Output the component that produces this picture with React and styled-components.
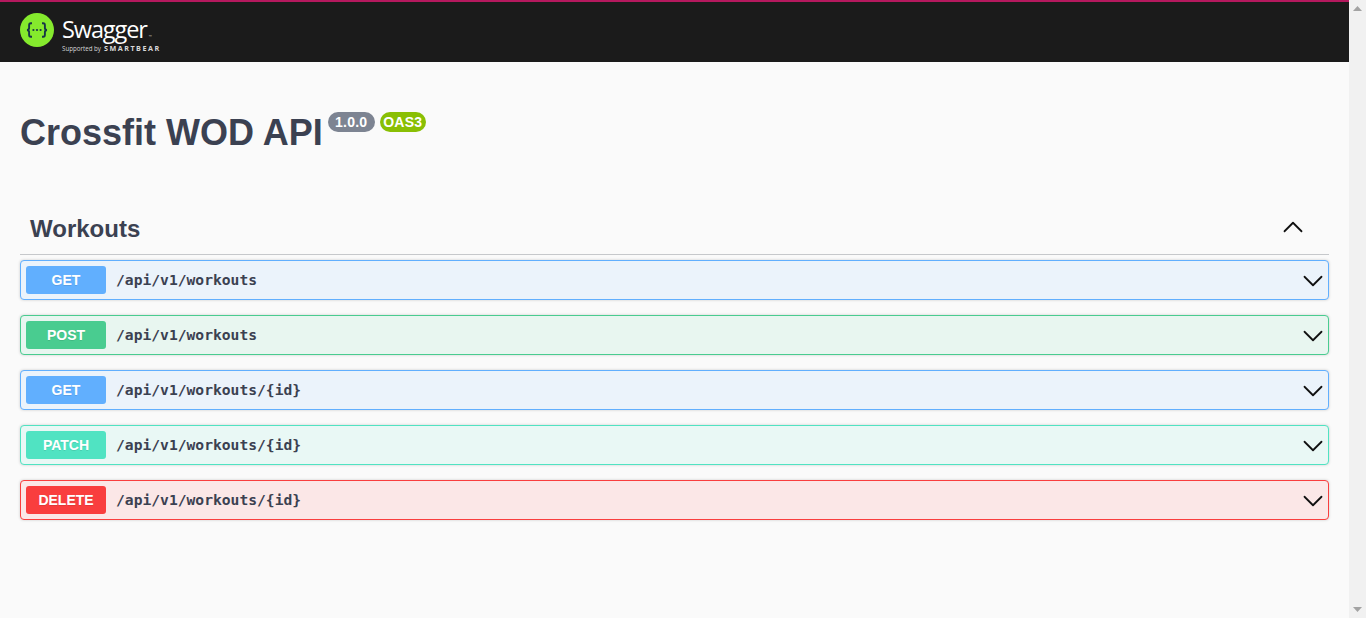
import React from "react";
import styled, { createGlobalStyle } from "styled-components";
import { ChevronUp, ChevronDown } from "lucide-react";

const Global = createGlobalStyle`
  html, body { margin: 0; padding: 0; height: 100%; overflow: hidden; background: #fafafa; }
  #root { height: 100%; }
`;
const Shell = styled.div`display: flex; height: 618px; font-family: "Liberation Sans", Arial, sans-serif; color: #3b4151;`;
const Page = styled.div`flex: 1; min-width: 0; display: flex; flex-direction: column; background: #fafafa;`;
const Topbar = styled.header`height: 60px; box-sizing: content-box; border-top: 2px solid #b5195e; background: #1b1b1b; display: flex; align-items: center; padding-left: 20px;`;
const Logo = styled.div`display: flex; align-items: center; gap: 8px;`;
const MarkBox = styled.div`display: flex; margin-top: -5px;`;
const LogoWords = styled.div`display: flex; flex-direction: column; color: #fff; margin-top: 6px;`;
const LogoName = styled.span`height: 24px; font: 400 23.5px/24px "Open Sans", sans-serif; letter-spacing: -1.1px;`;
const LogoMark = styled.span`font-size: 4px; line-height: 0; letter-spacing: 0; margin-left: 2px; color: #bbb;`;
const LogoSub = styled.span`display: flex; align-items: baseline; gap: 3px; margin-top: 3px; font: 400 6.2px/9px "Open Sans", sans-serif; color: #d8d8d8; white-space: nowrap;`;
const LogoBrand = styled.span`font: 700 7.2px/9px "Open Sans", sans-serif; letter-spacing: 1.5px;`;
const Content = styled.main`padding: 0 20px; display: flex; flex-direction: column;`;
const Title = styled.div`display: flex; align-items: flex-start; margin-top: 48px; height: 44px;`;
const Heading = styled.h1`margin: 0; font-size: 36px; line-height: 45px; font-weight: 700; color: #3b4151;`;
const Badge = styled.span`margin: 2px 0 0 5px; width: ${p => p.$width}px; height: 20px; border-radius: 10px; background: ${p => p.$bg}; color: #fff; font-size: 14px; letter-spacing: 0.25px; font-weight: 700; line-height: 20px; text-align: center;`;
const TagRow = styled.div`margin-top: 46px; height: 54px; box-sizing: content-box; border-bottom: 1px solid #c6c8cb; display: flex; align-items: center; justify-content: space-between; padding: 0 19px 0 10px;`;
const TagName = styled.h3`margin: 0; padding-top: 4px; font-size: 24px; font-weight: 700; color: #3b4151;`;
const Ops = styled.div`margin-top: 5px; display: flex; flex-direction: column; gap: 15px;`;
const Op = styled.div`height: 40px; box-sizing: border-box; border: 1px solid ${p => p.$color}; border-radius: 4px; background: ${p => p.$tint}; box-shadow: 0 0 3px rgba(0,0,0,.19); display: flex; align-items: center; padding: 0 0 0 5px;`;
const Method = styled.span`width: 80px; height: 28px; border-radius: 3px; background: ${p => p.$color}; color: #fff; font-size: 14px; font-weight: 700; display: flex; align-items: center; justify-content: center; text-shadow: 0 1px 0 rgba(0,0,0,.1);`;
const Path = styled.span`flex: 1; padding-left: 10px; margin-top: -1px; font: 700 14.65px "DejaVu Sans Mono", monospace; color: #3b4151;`;
const OpChevron = styled(ChevronDown)`flex: none; margin: 1px -2px 0 0;`;
const Scrollbar = styled.aside`width: 17px; flex: none; background: #f1f1f1; display: flex; flex-direction: column; justify-content: space-between; align-items: center; padding: 6px 0; box-sizing: border-box;`;
const Arrow = styled.svg`width: 9px; height: 5px; fill: #a3a3a3; display: block;`;

const ops = [
  ["GET", "/api/v1/workouts", "#61affe", "#ebf3fb"],
  ["POST", "/api/v1/workouts", "#49cc90", "#e8f6f0"],
  ["GET", "/api/v1/workouts/{id}", "#61affe", "#ebf3fb"],
  ["PATCH", "/api/v1/workouts/{id}", "#50e3c2", "#e9f8f5"],
  ["DELETE", "/api/v1/workouts/{id}", "#f93e3e", "#fbe7e7"],
];

const SwaggerMark = () => (
  <svg width="34" height="34" viewBox="0 0 34 34" aria-hidden="true">
    <circle cx="17" cy="17" r="17" fill="#85ea2d" />
    <g fill="none" stroke="#173647" strokeWidth="1.9">
      <path d="M12 10.3h-1.2c-1.3 0-1.7.8-1.7 2v2.6c0 1.2-.7 1.9-2 2.1 1.3.2 2 .9 2 2.1v2.6c0 1.2.4 2 1.7 2H12" />
      <path d="M22 10.3h1.2c1.3 0 1.7.8 1.7 2v2.6c0 1.2.7 1.9 2 2.1-1.3.2-2 .9-2 2.1v2.6c0 1.2-.4 2-1.7 2H22" />
    </g>
    <g fill="#173647">
      <circle cx="13.4" cy="17" r="1.1" />
      <circle cx="17" cy="17" r="1.1" />
      <circle cx="20.6" cy="17" r="1.1" />
    </g>
  </svg>
);

export default function App() {
  return (
    <Shell>
      <Global />
      <Page>
        <Topbar>
          <Logo>
            <MarkBox><SwaggerMark /></MarkBox>
            <LogoWords>
              <LogoName>Swagger<LogoMark>™</LogoMark></LogoName>
              <LogoSub>Supported by <LogoBrand>SMARTBEAR</LogoBrand></LogoSub>
            </LogoWords>
          </Logo>
        </Topbar>
        <Content>
          <Title>
            <Heading>Crossfit WOD API</Heading>
            <Badge $bg="#7d8492" $width={47}>1.0.0</Badge>
            <Badge $bg="#89bf04" $width={46}>OAS3</Badge>
          </Title>
          <TagRow>
            <TagName>Workouts</TagName>
            <ChevronUp size={34} strokeWidth={1.25} color="#111" />
          </TagRow>
          <Ops>
            {ops.map(([m, p, c, t], i) => (
              <Op key={i} $color={c} $tint={t}>
                <Method $color={c}>{m}</Method>
                <Path>{p}</Path>
                <OpChevron size={34} strokeWidth={1.25} color="#111" />
              </Op>
            ))}
          </Ops>
        </Content>
      </Page>
      <Scrollbar>
        <Arrow viewBox="0 0 9 5"><path d="M4.5 0L9 5H0z" /></Arrow>
        <Arrow viewBox="0 0 9 5"><path d="M4.5 5L9 0H0z" /></Arrow>
      </Scrollbar>
    </Shell>
  );
}
